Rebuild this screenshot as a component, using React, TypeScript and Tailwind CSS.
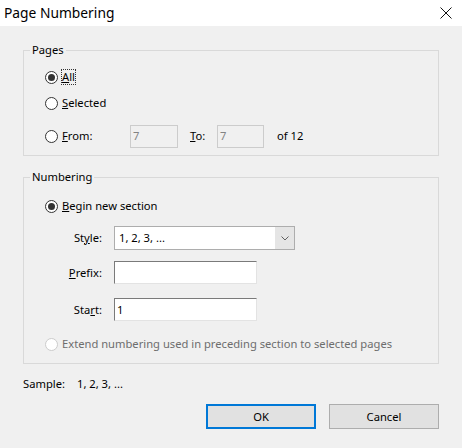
import React from 'react'

const font = 'font-["Segoe_UI","Noto_Sans",sans-serif]'

function Radio({ checked = false, disabled = false }: { checked?: boolean; disabled?: boolean }) {
  return (
    <span
      className={`flex h-[13px] w-[13px] shrink-0 items-center justify-center rounded-full border bg-white ${
        disabled ? 'border-[#cccccc]' : 'border-[#333333]'
      }`}
    >
      {checked && <span className="h-[7px] w-[7px] rounded-full bg-[#333333]" />}
    </span>
  )
}

function Field({ value = '', disabled = false, w }: { value?: string; disabled?: boolean; w: string }) {
  return (
    <div
      className={`${w} flex h-[23px] items-center border px-[2px] ${
        disabled
          ? 'border-[#cccccc] bg-[#f0f0f0] text-[#838383]'
          : 'border-[#e3e3e3] border-l-[#7a7a7a] border-t-[#7a7a7a] bg-white text-black'
      }`}
    >
      {value}
    </div>
  )
}

export default function App() {
  return (
    <div className={`${font} h-[448px] w-[462px] overflow-hidden bg-[#f0f0f0] text-[11.2px] leading-[16px] text-black`}>
      {/* Title bar */}
      <div className="flex h-[26px] items-center justify-between bg-white pl-[4px] pr-[10px]">
        <span className="text-[13.8px] leading-[20px]">Page Numbering</span>
        <svg width="12" height="12" viewBox="0 0 12 12" className="text-[#111]">
          <path d="M0.5 0.5 L11.5 11.5 M11.5 0.5 L0.5 11.5" stroke="currentColor" strokeWidth="1" fill="none" />
        </svg>
      </div>

      <div className="px-[23px]">
        {/* Pages */}
        <fieldset className="mt-[16px] border border-[#d9d9d9] pb-[6px]">
          <legend className="ml-[6px] px-[2px]">Pages</legend>
          <div className="pl-[21px]">
            <div className="mt-[6px] flex h-[26px] items-center gap-[3px]">
              <Radio checked />
              <span className="border border-dotted border-[#333] leading-[14px]">
                <span className="underline">A</span>ll
              </span>
            </div>
            <div className="flex h-[26px] items-center gap-[4px]">
              <Radio />
              <span>
                <span className="underline">S</span>elected
              </span>
            </div>
            <div className="mt-[7px] flex h-[26px] items-center">
              <Radio />
              <span className="ml-[4px] w-[68px]">
                <span className="underline">F</span>rom:
              </span>
              <Field value="7" disabled w="w-[48px]" />
              <span className="ml-[12px] w-[27px]">
                <span className="underline">T</span>o:
              </span>
              <Field value="7" disabled w="w-[47px]" />
              <span className="ml-[13px]">of 12</span>
            </div>
          </div>
        </fieldset>

        {/* Numbering */}
        <fieldset className="mt-[13px] border border-[#d9d9d9] pb-[6px]">
          <legend className="ml-[6px] px-[2px]">Numbering</legend>
          <div className="pl-[21px]">
            <div className="mt-[8px] flex h-[26px] items-center gap-[4px]">
              <Radio checked />
              <span>
                <span className="underline">B</span>egin new section
              </span>
            </div>
            <div className="mt-[6px] flex h-[26px] items-center">
              <span className="w-[57px] text-right">
                St<span className="underline">y</span>le:
              </span>
              <div className="ml-[12px] flex h-[24px] w-[181px] items-center border border-[#adadad] bg-white">
                <span className="flex-1 pl-[4px]">1, 2, 3, ...</span>
                <div className="flex h-full w-[19px] items-center justify-center bg-[#e5e5e5]">
                  <svg width="8" height="5" viewBox="0 0 8 5">
                    <path d="M0.5 0.5 L4 4 L7.5 0.5" stroke="#606060" strokeWidth="1" fill="none" />
                  </svg>
                </div>
              </div>
            </div>
            <div className="mt-[10px] flex h-[23px] items-center">
              <span className="w-[57px] text-right">
                <span className="underline">P</span>refix:
              </span>
              <div className="ml-[12px]">
                <Field w="w-[143px]" />
              </div>
            </div>
            <div className="mt-[14px] flex h-[23px] items-center">
              <span className="w-[57px] text-right">
                Sta<span className="underline">r</span>t:
              </span>
              <div className="ml-[12px]">
                <Field value="1" w="w-[143px]" />
              </div>
            </div>
            <div className="mt-[10px] flex h-[26px] items-center gap-[4px] text-[#6d6d6d]">
              <Radio disabled />
              <span>Extend numbering used in preceding section to selected pages</span>
            </div>
          </div>
        </fieldset>

        {/* Sample */}
        <div className="mt-[12px] flex h-[16px] items-center">
          <span className="w-[54px]">Sample:</span>
          <span>1, 2, 3, ...</span>
        </div>

        {/* Buttons */}
        <div className="mt-[12px] flex justify-end gap-[13px]">
          <button className="h-[25px] w-[110px] border-2 border-[#0078d7] bg-[#e1e1e1]">OK</button>
          <button className="h-[25px] w-[110px] border border-[#adadad] bg-[#e1e1e1]">Cancel</button>
        </div>
      </div>
    </div>
  )
}
